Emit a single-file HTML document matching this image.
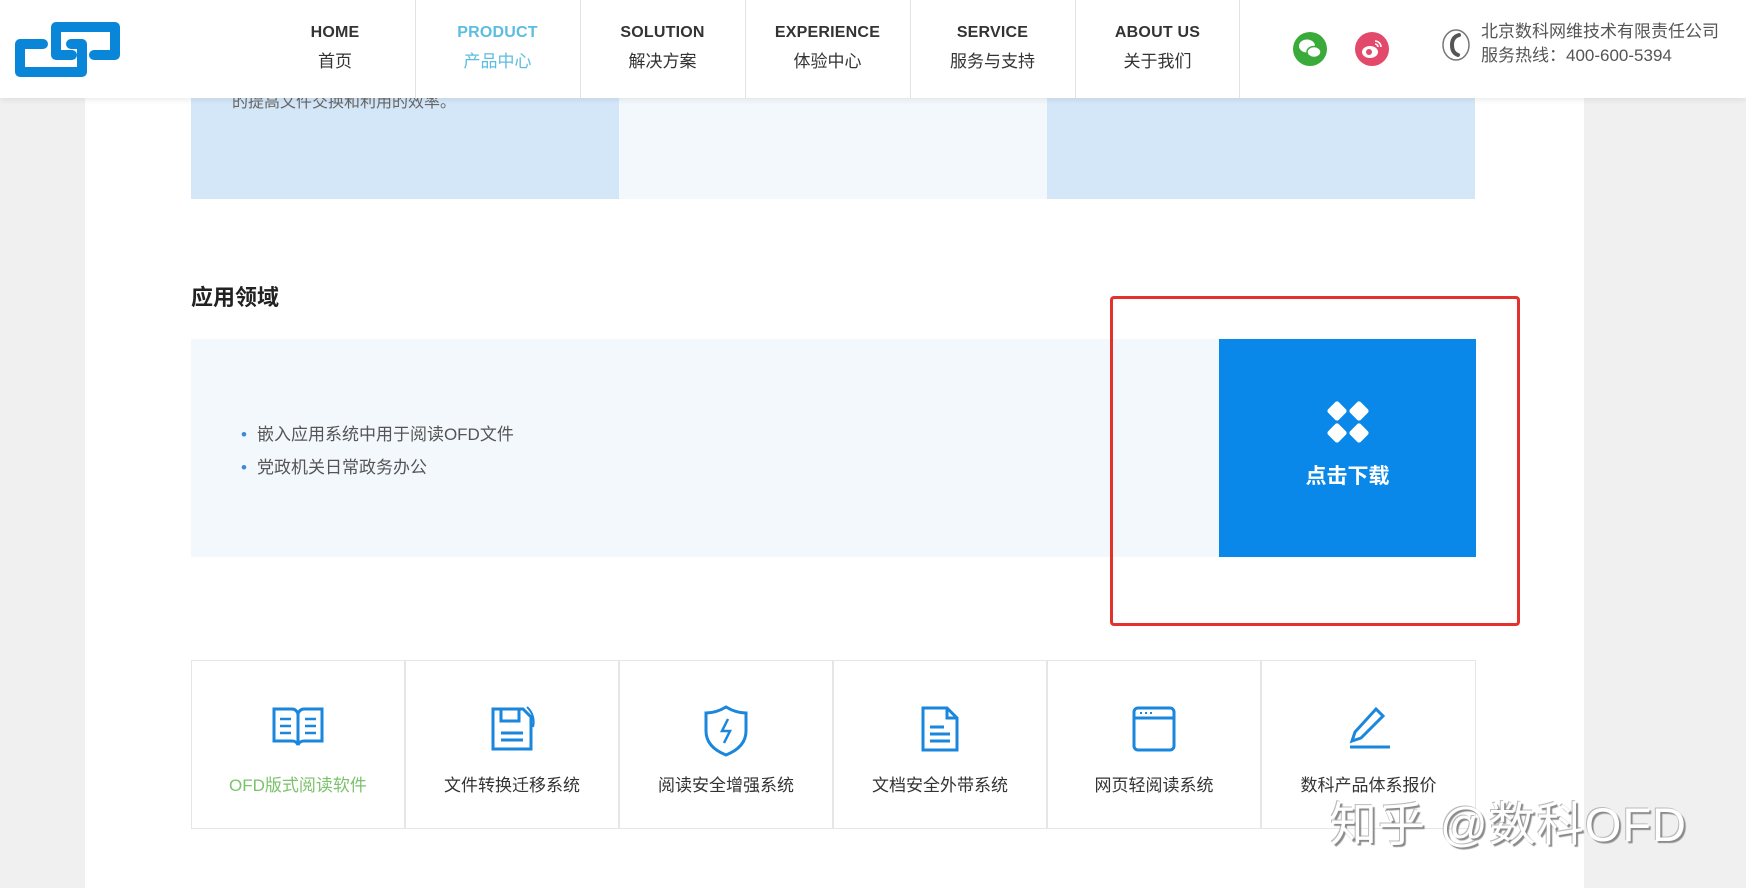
<!DOCTYPE html>
<html><head><meta charset="utf-8">
<style>
*{margin:0;padding:0;box-sizing:border-box}
body{width:1746px;height:888px;overflow:hidden;background:#f0f0f0;font-family:"Liberation Sans","Noto Sans CJK SC",sans-serif;position:relative}
.main{position:absolute;left:85px;top:0;width:1499px;height:888px;background:#fff}
.abs{position:absolute}
.hdr{position:absolute;left:0;top:0;width:1746px;height:98px;background:#fff;box-shadow:0 2px 6px rgba(0,0,0,.08);z-index:5}
.nav{position:absolute;top:0;height:98px;text-align:center}
.nav .en{font-size:16px;font-weight:bold;color:#333;margin-top:24px;letter-spacing:.2px}
.nav .cn{font-size:17px;color:#333;margin-top:5px}
.div{position:absolute;top:0;width:1px;height:98px;background:#e3e3e3}
.cell{position:absolute;top:660px;height:169px;width:214px;border:1px solid #e6e6e6;text-align:center}
.cell .lbl{position:absolute;left:0;right:0;top:110px;font-size:17px;color:#333}
.cell svg{position:absolute;left:50%;top:44px;transform:translateX(-50%)}
</style></head><body>
<div class="main"></div>
<div class="abs" style="left:191px;top:98px;width:428px;height:101px;background:#d4e7f9"></div>
<div class="abs" style="left:619px;top:98px;width:428px;height:101px;background:#f3f8fd"></div>
<div class="abs" style="left:1047px;top:98px;width:428px;height:101px;background:#d4e7f9"></div>
<div class="abs" style="left:232px;top:88px;font-size:16px;color:#666">的提高文件交换和利用的效率。</div>

<div class="hdr">
 <svg class="abs" style="left:10px;top:18px" width="115" height="62" viewBox="0 0 115 62">
  <g fill="none" stroke="#0a86d8" stroke-width="10" stroke-linejoin="round" stroke-linecap="round">
   <path d="M33 26 H10 V54 H72 V26 H61"/>
   <path d="M62 37 H46 V9 H105 V37 H84"/>
  </g>
 </svg>
 <div class="div" style="left:415px"></div><div class="div" style="left:580px"></div><div class="div" style="left:745px"></div><div class="div" style="left:910px"></div><div class="div" style="left:1075px"></div><div class="div" style="left:1239px"></div>
 <div class="nav" style="left:280px;width:110px"><div class="en">HOME</div><div class="cn">首页</div></div>
 <div class="nav" style="left:415px;width:165px"><div class="en" style="color:#5bbde0">PRODUCT</div><div class="cn" style="color:#5bbde0">产品中心</div></div>
 <div class="nav" style="left:580px;width:165px"><div class="en">SOLUTION</div><div class="cn">解决方案</div></div>
 <div class="nav" style="left:745px;width:165px"><div class="en">EXPERIENCE</div><div class="cn">体验中心</div></div>
 <div class="nav" style="left:910px;width:165px"><div class="en">SERVICE</div><div class="cn">服务与支持</div></div>
 <div class="nav" style="left:1075px;width:165px"><div class="en">ABOUT US</div><div class="cn">关于我们</div></div>
 <svg class="abs" style="left:1292px;top:31px" width="36" height="36"><circle cx="18" cy="18" r="17" fill="#3aab3a"/><ellipse cx="15" cy="15" rx="8" ry="6.5" fill="#fff"/><ellipse cx="22" cy="21" rx="7" ry="5.5" fill="#fff" stroke="#3aab3a" stroke-width="1.5"/></svg>
 <svg class="abs" style="left:1354px;top:31px" width="36" height="36"><circle cx="18" cy="18" r="17" fill="#e3496a"/><ellipse cx="16" cy="21" rx="8" ry="6" fill="#fff"/><circle cx="15" cy="21" r="3" fill="#e3496a"/><path d="M21 10a6 6 0 0 1 6 6M21 13a3 3 0 0 1 3 3" stroke="#fff" stroke-width="1.6" fill="none"/></svg>
 <svg class="abs" style="left:1441px;top:28px" width="30" height="34"><ellipse cx="15" cy="17" rx="13" ry="15" fill="none" stroke="#777" stroke-width="1.5"/><path d="M18 7 Q11 9 11 17 Q11 25 17 27" stroke="#555" stroke-width="4" fill="none" stroke-linecap="round"/></svg>
 <div class="abs" style="left:1481px;top:20px;font-size:17px;color:#555;line-height:24px">北京数科网维技术有限责任公司<br>服务热线：400-600-5394</div>
</div>

<div class="abs" style="left:191px;top:280px;font-size:22px;font-weight:bold;color:#222">应用领域</div>
<div class="abs" style="left:191px;top:339px;width:1028px;height:218px;background:#f3f8fd"></div>
<div class="abs" style="left:241px;top:418px;font-size:17px;color:#555;line-height:33px">
 <div><span style="color:#3c8ad6;margin-right:10px">•</span>嵌入应用系统中用于阅读OFD文件</div>
 <div><span style="color:#3c8ad6;margin-right:10px">•</span>党政机关日常政务办公</div>
</div>
<div class="abs" style="left:1219px;top:339px;width:257px;height:218px;background:#0a88ea"></div>
<svg class="abs" style="left:1327px;top:401px" width="42" height="42"><g fill="#fff">
 <rect x="2.5" y="2.5" width="15" height="15" rx="2.5" transform="rotate(45 10 10)"/>
 <rect x="24.5" y="2.5" width="15" height="15" rx="2.5" transform="rotate(45 32 10)"/>
 <rect x="2.5" y="24.5" width="15" height="15" rx="2.5" transform="rotate(45 10 32)"/>
 <rect x="24.5" y="24.5" width="15" height="15" rx="2.5" transform="rotate(45 32 32)"/>
</g></svg>
<div class="abs" style="left:1219px;top:460px;width:257px;text-align:center;font-size:21px;font-weight:bold;color:#fff">点击下载</div>
<div class="abs" style="left:1110px;top:296px;width:410px;height:330px;border:3px solid #e3312d;border-radius:4px"></div>

<div class="cell" style="left:191px"><svg width="54" height="44" viewBox="0 0 54 44" fill="none" stroke="#1a86dc" stroke-width="3"><path d="M3 4h18a6 6 0 0 1 6 6v30a6 6 0 0 0-6-4H3z"/><path d="M51 4H33a6 6 0 0 0-6 6v30a6 6 0 0 1 6-4h18z"/><path d="M9 14h11M9 21h11M9 28h11M34 14h11M34 21h11M34 28h11" stroke-width="2.5"/></svg><div class="lbl" style="color:#7ac26b">OFD版式阅读软件</div></div>
<div class="cell" style="left:405px"><svg width="50" height="46" viewBox="0 0 50 46" fill="none" stroke="#1a86dc" stroke-width="3"><path d="M6 4h30l8 8v32H6z"/><path d="M14 4v12h18V4M14 28h22M14 35h22" /><path d="M40 2a20 20 0 0 1 6 20" stroke-width="2"/></svg><div class="lbl">文件转换迁移系统</div></div>
<div class="cell" style="left:619px"><svg width="46" height="52" viewBox="0 0 46 52" fill="none" stroke="#1a86dc" stroke-width="3"><path d="M23 2 Q33 8 43 8 V26 Q43 42 23 50 Q3 42 3 26 V8 Q13 8 23 2z"/><path d="M25 14l-6 12h8l-6 12" stroke-width="2.5"/></svg><div class="lbl">阅读安全增强系统</div></div>
<div class="cell" style="left:833px"><svg width="40" height="48" viewBox="0 0 40 48" fill="none" stroke="#1a86dc" stroke-width="3"><path d="M3 3h24l10 10v32H3z"/><path d="M27 3v10h10M10 22h14M10 29h20M10 36h20"/></svg><div class="lbl">文档安全外带系统</div></div>
<div class="cell" style="left:1047px"><svg width="46" height="48" viewBox="0 0 46 48" fill="none" stroke="#1a86dc" stroke-width="3"><rect x="3" y="3" width="40" height="42" rx="4"/><path d="M3 13h40"/><path d="M9 8h2M14 8h2M19 8h2" stroke-width="2"/></svg><div class="lbl">网页轻阅读系统</div></div>
<div class="cell" style="left:1261px;width:215px"><svg width="46" height="46" viewBox="0 0 46 46" fill="none" stroke="#1a86dc" stroke-width="3"><path d="M30 4l7 7-22 22-9 3 3-9z"/><path d="M4 42h40"/></svg><div class="lbl">数科产品体系报价</div></div>

<div class="abs" style="left:1330px;top:786px;font-size:47px;color:#fff;text-shadow:2px 2px 1px #8a8a8a,-1px -1px 0 #bbb;letter-spacing:1px;z-index:9">知乎 @数科OFD</div>
</body></html>
